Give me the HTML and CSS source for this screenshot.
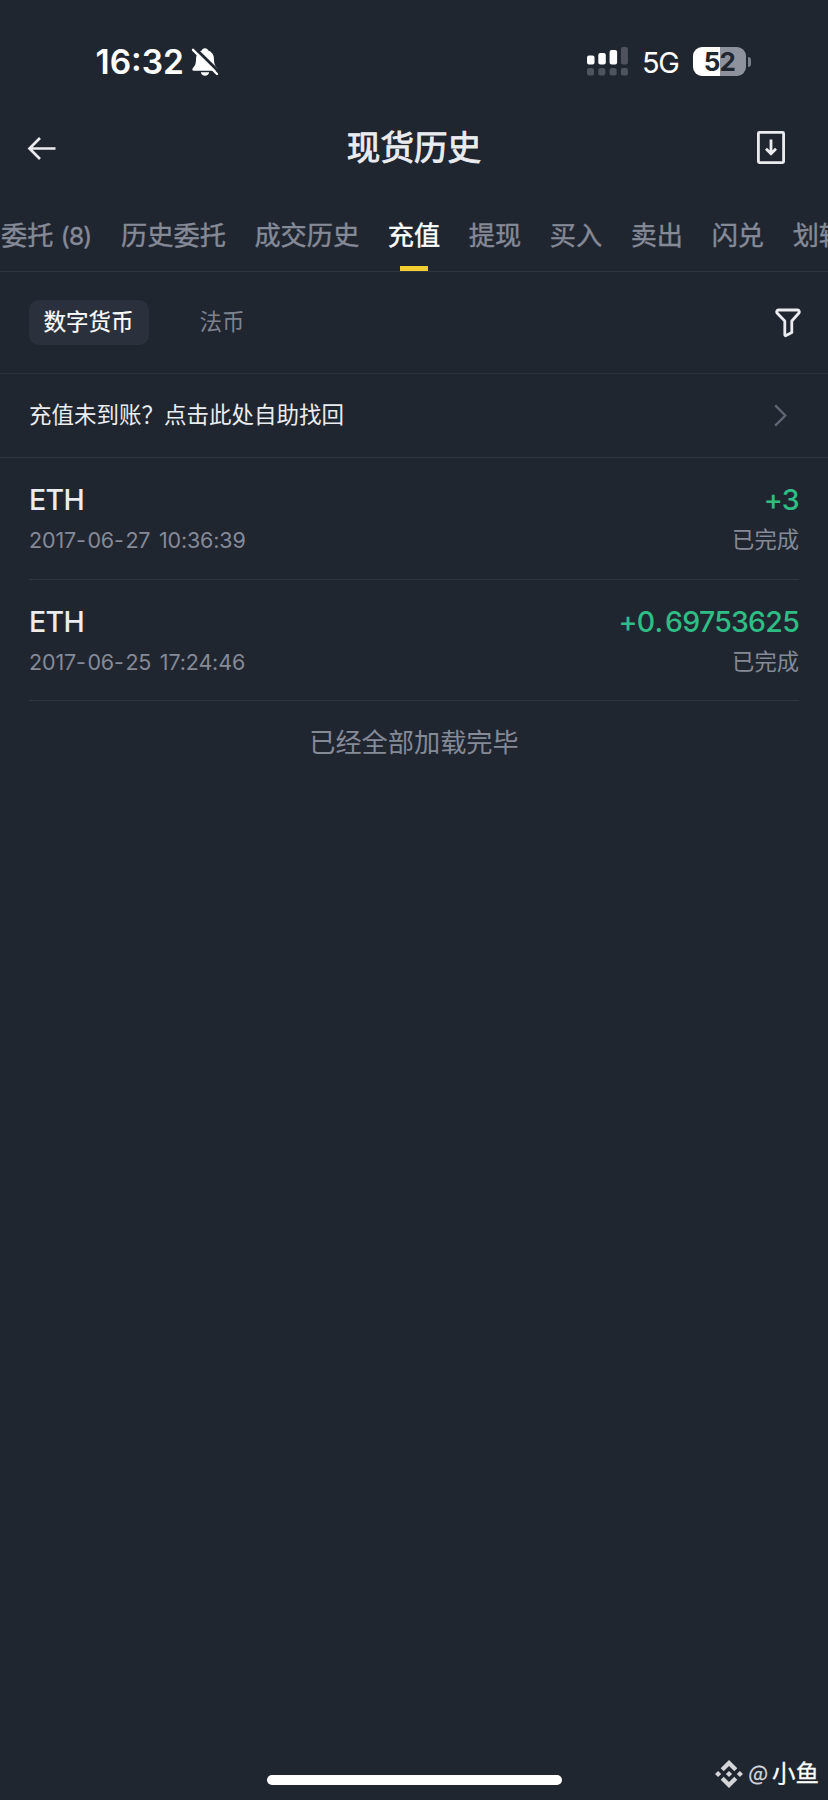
FILE: index.html
```html
<!DOCTYPE html>
<html lang="zh-CN">
<head>
<meta charset="utf-8">
<title>现货历史</title>
<link rel="stylesheet" href="styles.css">
</head>
<body>
<div class="screen">
  <div class="status">
    <span class="clock">16:32</span>
    <svg class="bell" width="28" height="30" viewBox="0 0 28 30">
      <path d="M14 1.200c-1.800 0-3 1.100-3.300 2.400C7 5 5 8 5 12c0 5-1 6.800-3.200 9.200-.9 1-.5 2.600 1 2.600h22.400c1.500 0 1.900-1.600 1-2.600C24 18.800 23 17 23 12c0-4-2-7-5.700-8.400C17 2.300 15.800 1.200 14 1.200zM9.800 25.300c.4 2.200 2.100 3.500 4.200 3.500s3.800-1.300 4.200-3.500z" fill="#fff"/>
      <path d="M3.500.8 28 24.800" stroke="#202630" stroke-width="3"/>
      <path d="M2 2.800 26 27" stroke="#fff" stroke-width="2.400" stroke-linecap="round"/>
    </svg>
    <svg class="signal" width="42" height="30" viewBox="0 0 42 30">
      <g fill="#fff"><rect x="0" y="8.500" width="7.500" height="9" rx="2"/><rect x="11.300" y="6" width="7.500" height="11.500" rx="2"/><rect x="22.600" y="3" width="7.500" height="14.500" rx="2"/></g>
      <g fill="#4e535d"><rect x="33.900" y="0" width="7" height="17.500" rx="2"/><rect x="0" y="21" width="7" height="7.500" rx="2"/><rect x="11.300" y="21" width="7" height="7.500" rx="2"/><rect x="22.600" y="21" width="7" height="7.500" rx="2"/><rect x="33.900" y="21" width="7" height="7.500" rx="2"/></g>
    </svg>
    <span class="network">5G</span>
    <div class="battery">52</div>
    <i class="battery-tip"></i>
  </div>

  <header class="header">
    <svg width="30" height="24" viewBox="0 0 30 24" fill="none" stroke="#eaecef" stroke-width="2.700"><path d="M28.500 12.500H2.500M13 2 2.500 12.500 13 23"/></svg>
    <h1 class="title">现货历史</h1>
    <svg width="28" height="33" viewBox="0 0 28 33" fill="none" stroke="#eaecef" stroke-width="2.800"><rect x="1.400" y="1.400" width="25.200" height="30.200" rx="1"/><path d="M14 8.500V23M9 17.800l5 5 5-5"/></svg>
  </header>

  <nav class="tabs">
    <span>委托 <span class="count">(8)</span></span><span>历史委托</span><span>成交历史</span><span class="active">充值</span><span>提现</span><span>买入</span><span>卖出</span><span>闪兑</span><span>划转</span>
  </nav>

  <div class="filters">
    <span class="chip selected">数字货币</span>
    <span class="chip">法币</span>
    <svg class="funnel" width="26" height="30" viewBox="0 0 26 30" fill="none" stroke="#eaecef" stroke-width="2.800" stroke-linejoin="round"><path d="M3.500 2h19c1.700 0 2.400 2 1.200 3.300L16.800 13v11.500L11 27.600c-.5.300-1.200 0-1.200-.8V13L2.300 5.300C1.100 4 1.800 2 3.500 2z"/></svg>
  </div>

  <div class="notice">
    <span class="notice-text">充值未到账&#xFF1F;点击此处自助找回</span>
    <svg width="13" height="23" viewBox="0 0 13 23" fill="none" stroke="#5e6673" stroke-width="2.400"><path d="M1.200 1.300 11.300 11.500 1.200 21.700"/></svg>
  </div>

  <ul class="records">
    <li class="record">
      <div class="line"><span class="coin">ETH</span><span class="amount">+3</span></div>
      <div class="line"><span class="time">2017<b>-</b>06<b>-</b>27<i> </i>10:36:39</span><span class="state">已完成</span></div>
    </li>
    <li class="record">
      <div class="line"><span class="coin">ETH</span><span class="amount">+0<b>.</b>69753625</span></div>
      <div class="line"><span class="time">2017<b>-</b>06<b>-</b>25<i> </i>17:24:46</span><span class="state">已完成</span></div>
    </li>
  </ul>
  <p class="end">已经全部加载完毕</p>

  <div class="bottom">
    <i class="home-bar"></i>
    <div class="credit">
      <svg width="28" height="28" viewBox="0 0 28 28" fill="#d3d5d8"><path d="M14 0 22.300 8.300 19.300 11.300 14 6 8.700 11.300 5.700 8.300zM14 28 5.700 19.700 8.700 16.700 14 22 19.300 16.700 22.300 19.700zM14 10.900 17.100 14 14 17.100 10.900 14zM3.100 10.900 6.200 14 3.100 17.100 0 14zM24.900 10.900 28 14 24.900 17.100 21.800 14z"/></svg>
      <span class="at">@</span><span class="name">小鱼</span>
    </div>
  </div>
</div>
</body>
</html>
```
FILE: styles.css
```css
* { box-sizing: border-box; }
body {
  margin: 0;
  background: #202630;
  color: #eaecef;
  font-family: Inter, "Noto Sans CJK SC", sans-serif;
}
svg { display: block; flex: none; }
.screen {
  width: 828px;
  height: 1800px;
  overflow: hidden;
  display: flex;
  flex-direction: column;
}
.status {
  flex: none;
  height: 109px;
  padding: 14px 77px 0 95.500px;
  display: flex;
  align-items: center;
  color: #fff;
}
.clock { width: 95.500px; font-size: 33.500px; font-weight: 600; letter-spacing: 0; white-space: nowrap; }
.signal { margin-left: 368px; }
.network { width: 37px; margin-left: 13px; padding-top: 1px; font-size: 29px; letter-spacing: -1.500px; }
.battery {
  width: 53px;
  height: 29px;
  margin-left: 14px;
  border-radius: 9px;
  background: linear-gradient(90deg, #fff 27.500px, #8d929c 27.500px);
  color: #202630;
  font-size: 26px;
  font-weight: 700;
  line-height: 29px;
  text-align: center;
  letter-spacing: -0.7px;
}
.battery-tip { width: 3px; height: 10px; margin-left: 2px; border-radius: 0 4px 4px 0; background: #7b808a; }
.header {
  flex: none;
  height: 77px;
  padding: 0 43px 0 27px;
  display: grid;
  grid-template-columns: 30px 1fr 28px;
  align-items: center;
}
.title {
  margin: 0;
  padding-left: 14px;
  font-size: 33.600px;
  font-weight: 400;
  line-height: 40px;
  text-align: center;
  -webkit-text-stroke: 0.9px;
}
.tabs {
  flex: none;
  height: 86px;
  padding-left: 1px;
  border-bottom: 1px solid #2f3640;
  display: flex;
  gap: 28.600px;
  color: #858a97;
  font-size: 26.200px;
  line-height: 100px;
  white-space: nowrap;
  -webkit-text-stroke: 0.4px;
}
.tabs > span { flex: none; height: 85px; }
.tabs > span:first-child { width: 91.500px; }
.count { font-size: 24.500px; letter-spacing: -0.8px; }
.tabs .active {
  color: #fff;
  background: linear-gradient(#f3ce30, #f3ce30) center bottom / 28px 5px no-repeat;
}
.filters {
  flex: none;
  height: 102px;
  padding: 0 27px 0 28.500px;
  border-bottom: 1px solid #2b313c;
  display: flex;
  align-items: center;
  gap: 36px;
}
.chip {
  height: 45px;
  padding: 0 15px;
  border-radius: 10px;
  color: #7d828f;
  font-size: 22.500px;
  line-height: 44px;
}
.chip.selected { background: #2b313c; color: #fff; -webkit-text-stroke: 0.2px; }
.funnel { margin-left: auto; }
.notice {
  flex: none;
  height: 84px;
  padding: 0 41px 0 29px;
  border-bottom: 1px solid #2f3640;
  display: flex;
  align-items: center;
  justify-content: space-between;
  font-size: 22.500px;
}
.notice-text { padding-bottom: 6px; }
.records { flex: none; margin: 0; padding: 0 29px; list-style: none; }
.record { height: 121.500px; padding-top: 22px; border-bottom: 1px solid #2f3640; }
.line { display: flex; justify-content: space-between; height: 40px; line-height: 40px; white-space: nowrap; }
.coin { font-size: 28.500px; font-weight: 500; letter-spacing: -0.6px; }
.amount { font-size: 28.500px; font-weight: 500; letter-spacing: -0.750px; color: #2ebd85; }
.amount b { font-weight: 500; letter-spacing: 2px; }
.time { font-size: 21.500px; letter-spacing: -0.150px; color: #858a97; }
.time b { font-weight: 400; letter-spacing: 1.500px; }
.time i { letter-spacing: 2.500px; }
.state { font-size: 22.300px; color: #858a97; }
.end { margin: 0; padding-top: 23px; font-size: 26.200px; line-height: 38px; text-align: center; color: #858a97; }
.bottom {
  margin-top: auto;
  height: 50px;
  padding-right: 9px;
  display: flex;
  align-items: flex-start;
}
.home-bar { width: 296px; height: 10px; margin: 25px 153px 0 267px; border-radius: 5px; background: #fff; }
.credit { display: flex; align-items: center; margin-top: 6px; height: 36px; white-space: nowrap; font-family: "Noto Sans CJK SC", sans-serif; line-height: 34px; }
.at { margin-left: 5px; padding-bottom: 5px; font-size: 21px; color: #d3d5d8; -webkit-text-stroke: 0.3px; }
.name { margin-left: 4px; padding-bottom: 5px; font-size: 23.500px; color: #fff; -webkit-text-stroke: 0.3px; }
```
